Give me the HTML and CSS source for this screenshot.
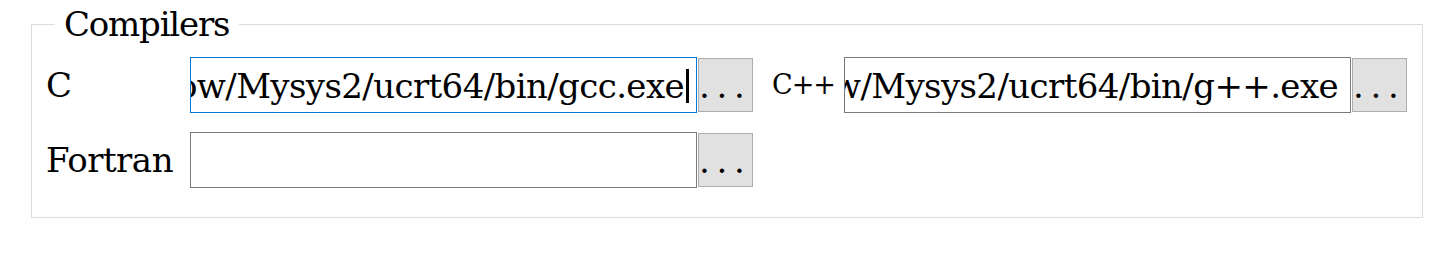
FILE: index.html
```html
<!DOCTYPE html>
<html>
<head>
<meta charset="utf-8">
<link rel="stylesheet" href="styles.css">
</head>
<body class="page">
<fieldset class="group">
  <legend class="group-title txt">Compilers</legend>
  <div class="row">
    <span class="label txt">C</span>
    <div class="picker">
      <div class="field focus"><span class="value txt">ow/Mysys2/ucrt64/bin/gcc.exe</span><span class="caret"></span></div>
      <button class="browse txt">...</button>
    </div>
    <span class="label label-short txt">C++</span>
    <div class="picker">
      <div class="field"><span class="value txt">ow/Mysys2/ucrt64/bin/g++.exe</span></div>
      <button class="browse txt">...</button>
    </div>
  </div>
  <div class="row">
    <span class="label txt label-long">Fortran</span>
    <div class="picker">
      <div class="field"><span class="value txt"></span></div>
      <button class="browse txt">...</button>
    </div>
  </div>
</fieldset>
</body>
</html>
```

FILE: styles.css
```css
.page {
  margin: 0;
  padding: 0;
  background: #ffffff;
}

.txt {
  font-family: "DejaVu Serif", serif;
  font-size: 34px;
  color: #000000;
}

.group {
  margin: 6px 19px 0 31px;
  padding: 15px 0 29px 14px;
  border: 1px solid #dcdcdc;
  min-width: 0;
}

.group-title {
  margin-left: 9px;
  padding: 0 10px 0 9px;
  line-height: 36px;
  height: 36px;
  letter-spacing: -1.2px;
}

.row {
  display: flex;
  align-items: center;
  height: 56px;
}

.row + .row {
  margin-top: 19px;
}

.label {
  width: 144px;
  flex: none;
  line-height: 54px;
  white-space: nowrap;
}

.label-long {
  letter-spacing: -0.5px;
}

.label-short {
  width: 72px;
  margin-left: 19px;
  font-size: 27px;
  letter-spacing: -1px;
  overflow: hidden;
}

.picker {
  display: flex;
  align-items: center;
  flex: none;
}

.field {
  box-sizing: border-box;
  width: 507px;
  height: 56px;
  border: 1px solid #7a7a7a;
  background: #ffffff;
  display: flex;
  align-items: center;
  justify-content: flex-end;
  overflow: hidden;
  padding: 3px 12px 0 0;
  white-space: nowrap;
}

.field.focus {
  border-color: #0078d7;
  padding-right: 7px;
}

.value {
  line-height: 51px;
  letter-spacing: -0.6px;
  flex: none;
}

.caret {
  flex: none;
  width: 3px;
  height: 34px;
  margin-left: 2px;
  margin-top: -2px;
  background: #000000;
}

.browse {
  box-sizing: border-box;
  width: 55px;
  height: 54px;
  margin: 0 0 0 1px;
  padding: 3px 0 0 0;
  border: 1px solid #adadad;
  background: #e1e1e1;
  line-height: 49px;
  letter-spacing: 6.7px;
  text-align: left;
  white-space: nowrap;
  overflow: hidden;
  display: block;
}
```
